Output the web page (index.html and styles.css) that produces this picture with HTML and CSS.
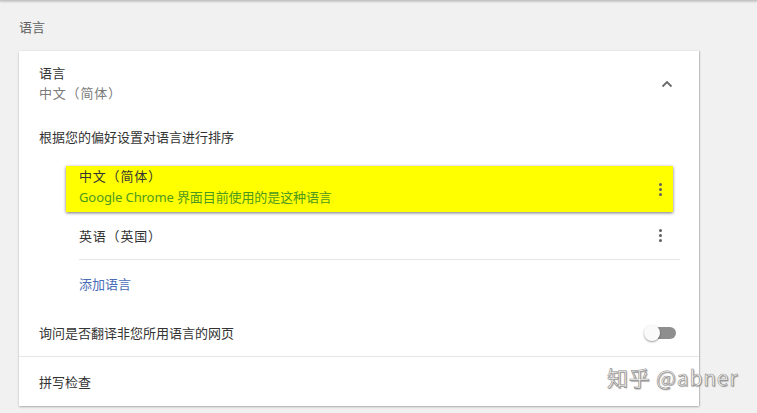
FILE: index.html
```html
<!DOCTYPE html>
<html lang="zh-CN">
<head>
  <meta charset="UTF-8">
  <meta name="viewport" content="width=device-width, initial-scale=1.0">
  <title>语言设置</title>
  <link rel="stylesheet" href="styles.css">
</head>
<body>
  <div class="topbar"></div>
  <div class="page">
    <h2 class="section-title">语言</h2>
    <div class="card">
      <div class="card-head">
        <div>
          <div class="label">语言</div>
          <div class="sub">中文（简体）</div>
        </div>
        <svg class="chevron" width="12" height="8" viewBox="0 0 12 8">
          <polyline points="1.5,6.5 6,2 10.5,6.5" fill="none" stroke="#6a6a6a" stroke-width="1.8"/>
        </svg>
      </div>

      <div class="sort-label">根据您的偏好设置对语言进行排序</div>

      <div class="lang-list">
        <div class="lang-row active">
          <div>
            <div class="label">中文（简体）</div>
            <div class="note">Google Chrome 界面目前使用的是这种语言</div>
          </div>
          <span class="more"><i></i><i></i><i></i></span>
        </div>
        <div class="lang-row">
          <div class="row-inner">
            <div class="label">英语（英国）</div>
            <span class="more"><i></i><i></i><i></i></span>
          </div>
        </div>
        <div class="add-lang">添加语言</div>
      </div>

      <div class="setting-row bordered">
        <span>询问是否翻译非您所用语言的网页</span>
        <span class="toggle"><span class="knob"></span></span>
      </div>
      <div class="setting-row">
        <span>拼写检查</span>
      </div>
    </div>
  </div>
  <div class="watermark">知乎 @abner</div>
</body>
</html>
```

FILE: styles.css
```css
* {
  margin: 0;
  padding: 0;
  box-sizing: border-box;
}
body {
  background: #f1f1f1;
  font-family: "Noto Sans", "Noto Sans CJK SC", sans-serif;
  font-size: 13px;
  color: #333;
  height: 413px;
  overflow: hidden;
}
.topbar {
  height: 1px;
  background: #c4c4c4;
  box-shadow: 0 1px 2px rgba(0, 0, 0, 0.25);
}
.page {
  padding: 0 58px 0 19px;
}
.section-title {
  font-size: 13px;
  font-weight: normal;
  color: #616161;
  line-height: 20px;
  padding-top: 16px;
  margin-bottom: 14px;
}
.card {
  background: #fff;
  width: 680px;
  box-shadow: 0 1px 2px rgba(0, 0, 0, 0.28), 1px 0 1px rgba(0, 0, 0, 0.12);
}
.label {
  line-height: 20px;
  color: #333;
  letter-spacing: 0.3px;
}
.sub {
  line-height: 20px;
  color: #7a7a7a;
  letter-spacing: 0.8px;
}
.card-head {
  height: 64px;
  padding: 12px 26px 0 20px;
  display: flex;
  justify-content: space-between;
  align-items: flex-start;
}
.chevron {
  margin-top: 17px;
}
.sort-label {
  line-height: 20px;
  padding: 12px 20px 0;
  height: 51px;
}
.lang-list {
  margin-left: 47px;
  margin-right: 19px;
}
.lang-row {
  display: flex;
  height: 48px;
  padding-left: 13px;
}
.lang-row .label {
  letter-spacing: 0.8px;
}
.lang-row.active {
  height: 46px;
  margin-right: 7px;
  background: #ffff00;
  justify-content: space-between;
  align-items: center;
  padding-right: 5px;
  box-shadow: 0 1px 3px rgba(0, 0, 0, 0.55);
}
.lang-row.active .label {
  line-height: 18px;
  margin-top: -3px;
}
.note {
  color: #4e9a1e;
  line-height: 24px;
  letter-spacing: -0.1px;
}
.row-inner {
  flex: 1;
  display: flex;
  justify-content: space-between;
  align-items: center;
  padding-right: 12px;
  border-bottom: 1px solid #e6e6e6;
}
.more {
  display: flex;
  flex-direction: column;
  gap: 2px;
  width: 16px;
  align-items: center;
}
.more i {
  width: 3px;
  height: 3px;
  border-radius: 50%;
  background: #5f5f5f;
}
.add-lang {
  height: 48px;
  line-height: 48px;
  padding-left: 13px;
  color: #4a6db8;
}
.setting-row {
  height: 49px;
  padding: 0 23px 0 20px;
  display: flex;
  justify-content: space-between;
  align-items: center;
}
.setting-row.bordered {
  border-bottom: 1px solid #e6e6e6;
}
.toggle {
  position: relative;
  width: 30px;
  height: 12px;
  border-radius: 6px;
  background: #8e8e8e;
  margin-top: 1px;
}
.knob {
  position: absolute;
  left: -2px;
  top: -2px;
  width: 16px;
  height: 16px;
  border-radius: 50%;
  background: #fafafa;
  box-shadow: 0 1px 2px rgba(0, 0, 0, 0.4);
}
.watermark {
  position: absolute;
  left: 607px;
  top: 362px;
  font-family: "Noto Sans CJK SC", sans-serif;
  font-size: 21px;
  letter-spacing: 0.8px;
  color: rgba(255, 255, 255, 0.85);
  -webkit-text-stroke: 0.6px #8a8a8a;
  text-shadow: 1px 1px 1px rgba(0, 0, 0, 0.35);
}
```
